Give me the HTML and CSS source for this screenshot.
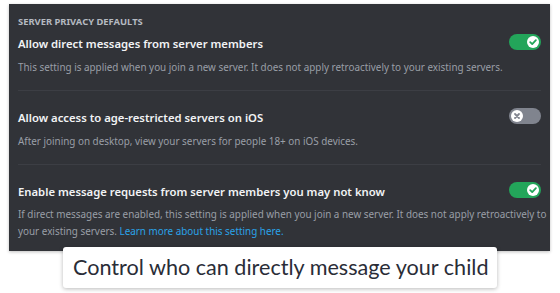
FILE: index.html
```html
<!DOCTYPE html>
<html>
<head>
<meta charset="utf-8">
<link rel="stylesheet" href="styles.css">
</head>
<body>
<div class="panel">
  <div class="header">Server Privacy Defaults</div>
  <div class="setting">
    <div class="title-row">
      <span class="title">Allow direct messages from server members</span>
      <span class="toggle on"><span class="knob"><svg viewBox="0 0 12 12" width="12" height="12"><path d="M3.2 6.2 L5.2 8.1 L8.9 4.1" fill="none" stroke="#23a55a" stroke-width="1.8" stroke-linecap="round" stroke-linejoin="round"/></svg></span></span>
    </div>
    <div class="desc">This setting is applied when you join a new server. It does not apply retroactively to your existing servers.</div>
  </div>
  <div class="sep"></div>
  <div class="setting">
    <div class="title-row">
      <span class="title">Allow access to age-restricted servers on iOS</span>
      <span class="toggle off"><span class="knob"><svg viewBox="0 0 12 12" width="12" height="12"><path d="M4 4 L8 8 M8 4 L4 8" fill="none" stroke="#80848e" stroke-width="1.8" stroke-linecap="round"/></svg></span></span>
    </div>
    <div class="desc">After joining on desktop, view your servers for people 18+ on iOS devices.</div>
  </div>
  <div class="sep"></div>
  <div class="setting">
    <div class="title-row">
      <span class="title">Enable message requests from server members you may not know</span>
      <span class="toggle on"><span class="knob"><svg viewBox="0 0 12 12" width="12" height="12"><path d="M3.2 6.2 L5.2 8.1 L8.9 4.1" fill="none" stroke="#23a55a" stroke-width="1.8" stroke-linecap="round" stroke-linejoin="round"/></svg></span></span>
    </div>
    <div class="desc last">If direct messages are enabled, this setting is applied when you join a new server. It does not apply retroactively to your existing servers. <a class="link">Learn more about this setting here.</a></div>
  </div>
</div>
<div class="caption">Control who can directly message your child</div>
</body>
</html>
```

FILE: styles.css
```css
html, body {
  margin: 0;
  padding: 0;
  background: #ffffff;
}
body {
  width: 560px;
  height: 293px;
  overflow: hidden;
}
.panel {
  margin: 4px 0 0 9px;
  width: 541px;
  height: 247px;
  box-sizing: border-box;
  background: #313338;
  padding: 12px 9px 0 9px;
  box-shadow: 0 1px 3px rgba(0,0,0,0.25);
  font-family: "Noto Sans", sans-serif;
}
.header {
  font-size: 9.4px;
  line-height: 12px;
  font-weight: 700;
  text-transform: uppercase;
  color: #b5bac1;
  margin-bottom: 8px;
}
.title-row {
  display: flex;
  justify-content: space-between;
  align-items: flex-start;
  height: 16px;
}
.title {
  font-size: 11.3px;
  line-height: 16px;
  font-weight: 600;
  color: #f2f3f5;
}
.desc {
  margin-top: 7px;
  margin-right: -6px;
  font-size: 9.9px;
  line-height: 17px;
  color: #9a9fa7;
}
.desc.last {
  margin-top: 6px;
}
.link {
  color: #2aa3e8;
}
.sep {
  height: 1px;
  background: #3c3e44;
  margin: 14px 0 19px 0;
}
.toggle {
  width: 32px;
  height: 16px;
  border-radius: 8px;
  display: flex;
  align-items: center;
  box-sizing: border-box;
  padding: 0 2px;
  margin-top: -2px;
}
.toggle.on {
  background: #23a55a;
  justify-content: flex-end;
}
.toggle.off {
  background: #80848e;
  justify-content: flex-start;
}
.knob {
  width: 12px;
  height: 12px;
  border-radius: 50%;
  background: #ffffff;
  display: flex;
}
.caption {
  position: relative;
  margin: -4px 0 0 63px;
  width: 434px;
  height: 41px;
  box-sizing: border-box;
  background: #ffffff;
  border-radius: 3px;
  box-shadow: 0 1px 4px rgba(0,0,0,0.28);
  font-family: "Lato", sans-serif;
  font-size: 21.6px;
  line-height: 40px;
  color: #2a2d37;
  padding-left: 10px;
  white-space: nowrap;
}
```
